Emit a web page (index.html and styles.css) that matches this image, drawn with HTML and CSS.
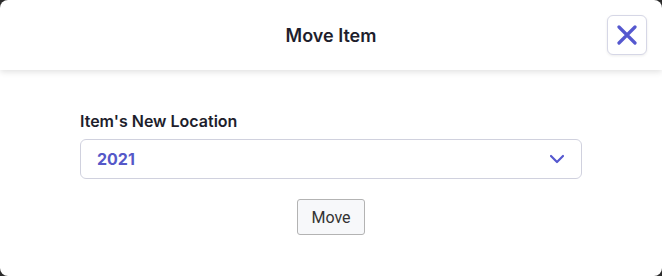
FILE: index.html
```html
<!DOCTYPE html>
<html>
<head>
  <title>Move Item</title>
  <link rel="stylesheet" href="styles.css">
</head>
<body>

<div class="modal">
  <div class="modal-header">
    <h1>Move Item</h1>
    <button class="close-btn" aria-label="Close">
      <svg width="20" height="20" viewBox="0 0 20 20">
        <path d="M2 2 L18 18 M18 2 L2 18" stroke="#5558cf" stroke-width="3.2" stroke-linecap="round" fill="none"/>
      </svg>
    </button>
  </div>

  <div class="modal-body">
    <label class="field-label">Item's New Location</label>
    <div class="select">
      <span class="select-value">2021</span>
      <svg class="chevron" width="16" height="10" viewBox="0 0 16 10">
        <path d="M2 2 L8 8 L14 2" stroke="#5558cf" stroke-width="2.2" stroke-linecap="round" stroke-linejoin="round" fill="none"/>
      </svg>
    </div>
    <div class="actions">
      <button class="move-btn">Move</button>
    </div>
  </div>
</div>

</body>
</html>
```

FILE: styles.css
```css
html, body {
  height: 100%;
}

body {
  margin: 0;
  background-color: #2b2b2b;
  font-family: Inter, "Liberation Sans", sans-serif;
  color: #1e1e2c;
}

.modal {
  height: 100%;
  box-sizing: border-box;
  background-color: #fff;
  border-radius: 8px;
  overflow: hidden;
}

.modal-header {
  height: 70px;
  display: flex;
  align-items: center;
  justify-content: center;
  position: relative;
  box-shadow: 0 2px 6px rgba(0, 0, 0, 0.12);
}

.modal-header h1 {
  margin: 0;
  font-size: 18px;
  font-weight: 600;
  color: #1e1e2c;
}

.close-btn {
  position: absolute;
  top: 15px;
  right: 15px;
  width: 40px;
  height: 40px;
  padding: 0;
  display: flex;
  align-items: center;
  justify-content: center;
  background: #fff;
  border: 1px solid #d6d7e6;
  border-radius: 6px;
  box-shadow: 0 1px 3px rgba(0, 0, 0, 0.08);
}

.modal-body {
  padding: 41px 80px 0 80px;
}

.field-label {
  display: block;
  font-size: 16px;
  font-weight: 600;
  color: #1e1e2c;
  margin-bottom: 8px;
}

.select {
  height: 40px;
  box-sizing: border-box;
  display: flex;
  align-items: center;
  justify-content: space-between;
  padding: 0 16px;
  border: 1px solid #d0d1de;
  border-radius: 6px;
}

.select-value {
  font-size: 16px;
  font-weight: 700;
  color: #5558c8;
}

.actions {
  display: flex;
  justify-content: center;
  margin-top: 20px;
}

.move-btn {
  height: 36px;
  padding: 0 13px;
  font-family: Roboto, "Liberation Sans", sans-serif;
  font-size: 16px;
  color: #333;
  background-color: #f7f8fa;
  border: 1px solid #b3b3b3;
  border-radius: 3px;
}
```
